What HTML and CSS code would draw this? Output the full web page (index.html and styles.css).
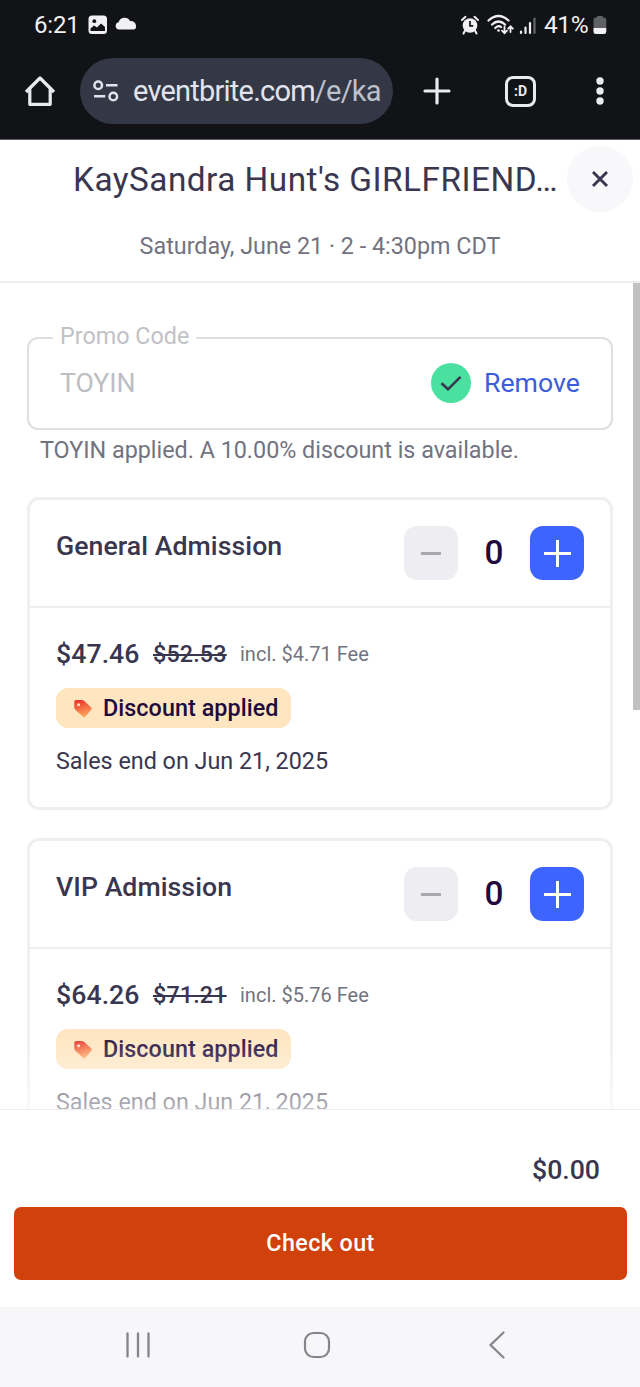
FILE: index.html
```html
<!DOCTYPE html>
<html lang="en">
<head>
<meta charset="utf-8">
<title>Checkout</title>
<link rel="stylesheet" href="styles.css">
</head>
<body>
<svg width="0" height="0" class="defs">
  <defs>
    <linearGradient id="tagfill" x1="0" y1="0" x2="0.3" y2="1">
      <stop offset="0.1" stop-color="#e8382d"/><stop offset="1" stop-color="#ffa35c"/>
    </linearGradient>
    <symbol id="tag" viewBox="0 0 20 20">
      <path fill="url(#tagfill)" d="M3 1H9Q10 1 11 1.8L18.300 8.500Q19.300 9.500 18.400 10.600L12.500 17.600Q11.300 18.800 10 17.800L2.300 10.800Q1.300 9.800 1.300 8.700V2.700Q1.300 1 3 1Z"/>
      <circle cx="5.600" cy="5.700" r="1.500" fill="#ffe5c4"/>
    </symbol>
  </defs>
</svg>
<div class="phone">
  <header class="chrome">
    <div class="status">
      <span class="clock">6:21</span>
      <svg class="ic-photo" width="20" height="20" viewBox="0 0 20 20"><rect x="0.500" y="0.500" width="18.500" height="18.500" rx="3.500" fill="#f1f1f3"/><circle cx="6.300" cy="6.200" r="1.900" fill="#111317"/><path d="M2.500 16V13.500L6 10.500L9 12.500L13 8.500L17 12V16Z" fill="#111317"/></svg>
      <svg class="ic-cloud" width="22" height="14" viewBox="0 0 22 14"><path d="M4 12.500A3.700 3.700 0 0 1 3.600 5.200A6.200 6.200 0 0 1 15 4A5 5 0 0 1 21 8.500Q21.700 12.500 18 12.500Z" fill="#f1f1f3"/></svg>
      <svg class="ic-alarm" width="18" height="20" viewBox="0 0 18 20"><circle cx="9" cy="10.500" r="7.300" fill="#f1f1f3"/><path d="M1 5L4.500 1.800M17 5L13.500 1.800M4 15.500L2.500 18.500M14 15.500L15.500 18.500" stroke="#f1f1f3" stroke-width="2" stroke-linecap="round"/><path d="M9 6V10.800H12.200" fill="none" stroke="#111317" stroke-width="1.700"/></svg>
      <svg class="ic-wifi" width="27" height="21" viewBox="0 0 27 21" fill="none" stroke="#f1f1f3" stroke-width="2.200" stroke-linecap="round"><path d="M1.500 6.500Q11.500 -2.500 21.500 6.500M5 10.500Q11.500 4.500 18 10.500M8.300 14Q11.500 11 14 13"/><circle cx="11.500" cy="16.500" r="1.300" fill="#f1f1f3" stroke="none"/><path d="M17.500 12.500V19M15 16.700L17.500 19.200L20 16.700M23.500 18V12.500M21.300 14.700L23.500 12.300L25.800 14.700" stroke-width="1.800"/></svg>
      <svg class="ic-signal" width="18" height="18" viewBox="0 0 18 18" stroke-width="2.200" stroke-linecap="round"><path d="M2 14.500V16M6.500 10.500V16M11 6V16" stroke="#f1f1f3"/><path d="M15.500 1.500V16" stroke="#65676b"/></svg>
      <span class="percent">41%</span>
      <svg class="ic-battery" width="14" height="20" viewBox="0 0 14 20"><path d="M4 2.500V2Q4 1 5 1H9Q10 1 10 2V2.500H11Q13.300 2.500 13.300 5V13H0.500V5Q0.500 2.500 3 2.500Z" fill="#606164"/><path d="M0.500 13H13.300V16.500Q13.300 19 11 19H3Q0.500 19 0.500 16.500Z" fill="#f1f1f3"/></svg>
    </div>
    <div class="toolbar">
      <svg class="ic-home" width="32" height="32" viewBox="0 0 32 32" fill="none" stroke="#eaebf0" stroke-width="3.200"><path d="M2 17L16 3L30 17" stroke-linejoin="round"/><path d="M5.800 14V29.300H26.200V14" stroke-linejoin="round"/></svg>
      <div class="address">
        <svg width="26" height="22" viewBox="0 0 26 22" fill="none" stroke="#e2e4ed" stroke-width="2.500"><circle cx="5.200" cy="5.300" r="3.800"/><path d="M13 5.300H24.500M1 16.300H12.300"/><circle cx="20.300" cy="16.500" r="3.800"/></svg>
        <span class="url">eventbrite.com<span class="path">/e/ka</span></span>
      </div>
      <svg class="ic-plus" width="28" height="28" viewBox="0 0 28 28" stroke="#eaebf0" stroke-width="3.200" stroke-linecap="round"><path d="M14 2V26M2 14H26"/></svg>
      <span class="tabs">:D</span>
      <svg class="ic-dots" width="8" height="28" viewBox="0 0 8 28" fill="#eaebf0"><circle cx="4" cy="4" r="3.700"/><circle cx="4" cy="14" r="3.700"/><circle cx="4" cy="24" r="3.700"/></svg>
    </div>
  </header>

  <section class="event">
    <div class="event-top">
      <h1>KaySandra Hunt's GIRLFRIEND…</h1>
      <button class="close" aria-label="Close"><svg width="18" height="18" viewBox="0 0 18 18" stroke="#39364f" stroke-width="2.900"><path d="M2 2L16 16M16 2L2 16"/></svg></button>
    </div>
    <p class="date">Saturday, June 21 · 2 - 4:30pm CDT</p>
  </section>

  <main class="tickets">
    <div class="promo">
      <span class="promo-label">Promo Code</span>
      <span class="promo-value">TOYIN</span>
      <svg width="40" height="40" viewBox="0 0 40 40"><circle cx="20" cy="20" r="20" fill="#49e0a0"/><path d="M10.500 20.300L17 26.300L29.500 13.800" fill="none" stroke="#39364f" stroke-width="2.600"/></svg>
      <a class="remove">Remove</a>
    </div>
    <p class="hint">TOYIN applied. A 10.00% discount is available.</p>

    <article class="card">
      <div class="card-head">
        <h2>General Admission</h2>
        <div class="stepper">
          <button class="step minus" aria-label="Decrease"></button>
          <span class="qty">0</span>
          <button class="step plus" aria-label="Increase"></button>
        </div>
      </div>
      <div class="card-body">
        <div class="prices"><b class="now">$47.46</b><s class="was">$52.53</s><span class="fee">incl. $4.71 Fee</span></div>
        <span class="badge"><svg width="20" height="20"><use href="#tag"/></svg>Discount applied</span>
        <p class="sales">Sales end on Jun 21, 2025</p>
      </div>
    </article>

    <article class="card">
      <div class="card-head">
        <h2>VIP Admission</h2>
        <div class="stepper">
          <button class="step minus" aria-label="Decrease"></button>
          <span class="qty">0</span>
          <button class="step plus" aria-label="Increase"></button>
        </div>
      </div>
      <div class="card-body">
        <div class="prices"><b class="now">$64.26</b><s class="was">$71.21</s><span class="fee">incl. $5.76 Fee</span></div>
        <span class="badge"><svg width="20" height="20"><use href="#tag"/></svg>Discount applied</span>
        <p class="sales">Sales end on Jun 21, 2025</p>
      </div>
    </article>
    <div class="fade"></div>
    <div class="scrollbar"></div>
  </main>

  <footer class="summary">
    <div class="total">$0.00</div>
    <button class="checkout">Check out</button>
  </footer>

  <nav class="sysnav">
    <svg width="28" height="30" viewBox="0 0 28 30" stroke="#858588" stroke-width="2.300" stroke-linecap="round"><path d="M3.500 3.500V26.500M14 3.500V26.500M24.500 3.500V26.500"/></svg>
    <svg class="nav-home" width="28" height="28" viewBox="0 0 28 28" fill="none" stroke="#858588" stroke-width="2.200"><rect x="2" y="2" width="24" height="24" rx="8.500"/></svg>
    <svg class="nav-back" width="18" height="30" viewBox="0 0 18 30" fill="none" stroke="#858588" stroke-width="2.200" stroke-linecap="round"><path d="M15.500 2.500L2.500 15L15.500 27.500"/></svg>
  </nav>
</div>
</body>
</html>
```

FILE: styles.css
```css
* { box-sizing: border-box; margin: 0; }
body { background: #fff; font-family: Roboto, "Liberation Sans", sans-serif; color: #39364f; }
button { border: 0; padding: 0; font: inherit; }
svg { display: block; flex: none; }
.defs { position: absolute; }
.phone { width: 640px; height: 1387px; display: flex; flex-direction: column; overflow: hidden; }

.chrome { height: 140px; background: #111317; border-bottom: 1px solid #5a5b5e; flex: none; }
.status { height: 58px; padding: 0 33px 9px 34px; display: flex; align-items: center; color: #f1f1f3; font-size: 24px; white-space: nowrap; }
.clock { width: 54px; letter-spacing: -0.2px; }
.ic-cloud { margin-left: 7px; margin-bottom: 2px; }
.ic-alarm { margin-left: auto; }
.ic-wifi { margin-left: 8px; }
.ic-signal { margin-left: 5px; margin-top: 2px; }
.percent { margin-left: 7px; width: 46px; font-size: 24.5px; letter-spacing: -0.4px; }
.ic-battery { margin-left: 3px; }

.toolbar { height: 66px; display: flex; align-items: center; padding-left: 24px; }
.address { width: 313px; height: 66px; border-radius: 33px; background: #343846; margin-left: 24px; padding-left: 13px; display: flex; align-items: center; }
.url { margin-left: 14px; font-size: 29px; letter-spacing: -0.78px; color: #e2e4ed; white-space: nowrap; }
.path { color: #bdc1cc; }
.ic-plus { margin-left: 30px; }
.tabs { margin-left: 54px; width: 31px; height: 31px; border: 3px solid #eaebf0; border-radius: 8px; color: #eaebf0; font-size: 14px; font-weight: 700; line-height: 24px; text-align: center; }
.ic-dots { margin-left: 60px; }

.event { height: 143px; border-bottom: 2px solid #eeeef0; flex: none; }
.event-top { display: flex; align-items: center; height: 77px; padding-left: 73px; }
h1 { width: 494px; padding-top: 1px; font-size: 33.33px; font-weight: 400; letter-spacing: 0.48px; white-space: nowrap; }
.close { width: 66px; height: 66px; border-radius: 50%; background: #f8f8fb; display: flex; align-items: center; justify-content: center; flex: none; }
.date { margin-top: 15px; line-height: 28px; font-size: 23.33px; text-align: center; color: #72737f; }

.tickets { height: 826px; padding: 54px 27px 0; position: relative; overflow: hidden; flex: none; }
.promo { height: 93px; border: 2px solid #dfdfe3; border-radius: 11px; position: relative; display: flex; align-items: center; padding: 0 30px 2px 31px; }
.promo-label { position: absolute; left: 24px; top: -18px; padding: 0 7px; background: #fff; font-size: 23.33px; line-height: 30px; color: #c0c1c6; }
.promo-value { flex: 1; font-size: 26.67px; color: #bdbec3; }
.remove { margin-left: 13px; width: 97px; font-size: 26.67px; color: #3c5cdb; }
.hint { padding-left: 13px; margin-top: 5px; line-height: 30px; font-size: 23.33px; color: #72737f; white-space: nowrap; }
.card { margin-top: 32px; height: 313px; border: 3px solid #efeff2; border-radius: 12px; }
.card + .card { margin-top: 28px; }
.card-head { height: 108px; border-bottom: 2px solid #efeff2; padding: 26px 26px 0 26px; display: flex; justify-content: space-between; }
h2 { font-size: 26.67px; line-height: 40px; font-weight: 500; letter-spacing: 0.06px; }
.stepper { display: flex; align-items: center; height: 54px; }
.step { width: 54px; height: 54px; border-radius: 13px; }
.minus { background: linear-gradient(#a9a8b0, #a9a8b0) 50% 50% / 20px 3px no-repeat #eeedf2; }
.plus { background: linear-gradient(#fff, #fff) 50% 50% / 27px 3px no-repeat, linear-gradient(#fff, #fff) 50% 50% / 3px 27px no-repeat, #3d64ff; }
.qty { width: 72px; padding-bottom: 2px; text-align: center; font-size: 33.33px; font-weight: 500; color: #1e0a3c; }
.card-body { padding: 29px 26px 0; }
.prices { display: flex; align-items: center; height: 34px; white-space: nowrap; }
.now { font-size: 26.67px; font-weight: 500; width: 97px; letter-spacing: 0.06px; }
.was { font-size: 23.33px; font-weight: 500; width: 87px; letter-spacing: 0.15px; }
.fee { font-size: 20px; color: #72737f; }
.badge { margin-top: 17px; width: 235px; height: 40px; border-radius: 12px; background: #ffe5c0; display: flex; align-items: center; gap: 10px; padding-left: 17px; font-size: 23.33px; font-weight: 500; letter-spacing: 0.06px; color: #1e0a3c; white-space: nowrap; }
.badge svg { margin-top: 2px; }
.sales { margin-top: 18px; line-height: 30px; font-size: 23.33px; }
.fade { position: absolute; left: 0; right: 0; bottom: 0; height: 80px; background: linear-gradient(rgba(255,255,255,0), rgba(255,255,255,0.62)); }
.scrollbar { position: absolute; right: 0; top: 0; width: 7px; height: 427px; background: #c1c1c1; }

.summary { height: 198px; border-top: 1px solid #eeeef0; padding: 45px 13px 0 14px; flex: none; }
.total { height: 30px; line-height: 30px; padding-right: 27px; text-align: right; font-size: 26.67px; font-weight: 500; }
.checkout { display: block; margin-top: 22px; width: 613px; height: 73px; padding-bottom: 1px; border-radius: 7px; background: #d1410c; color: #fff; font-size: 23.33px; font-weight: 500; letter-spacing: 0.4px; }
.sysnav { height: 80px; background: #f7f7fa; padding: 0 0 4px 124px; display: flex; align-items: center; }
.nav-home { margin-left: 151px; }
.nav-back { margin-left: 157px; }
```
